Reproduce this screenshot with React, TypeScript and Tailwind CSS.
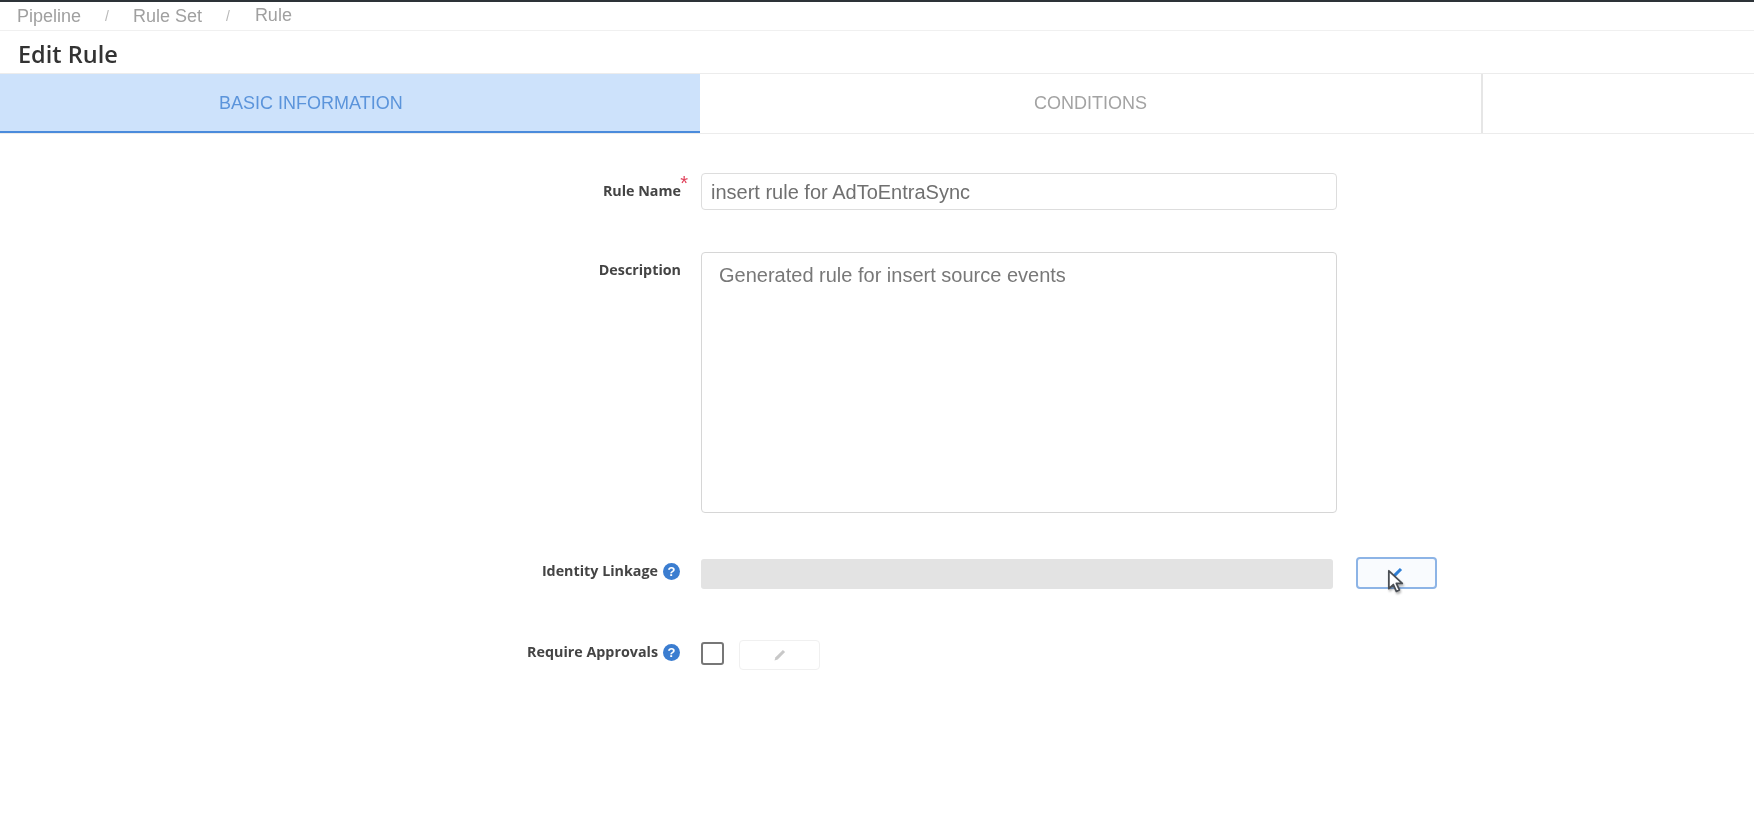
const labelClass = "font-['Open_Sans',sans-serif] text-[14.3px] font-bold leading-none text-[#444444]";

function HelpIcon() {
  return (
    <span className="flex h-[17px] w-[17px] items-center justify-center rounded-full bg-[#3b7dd0] font-['Liberation_Sans',sans-serif] text-[13px] font-bold leading-none text-white">
      ?
    </span>
  );
}

function PencilIcon({ color }: { color: string }) {
  return (
    <svg width="16" height="16" viewBox="0 0 16 16" fill="none">
      <path d="M2.5 13.5l1-3.2 7.4-7.4 2.2 2.2-7.4 7.4z" fill={color} />
    </svg>
  );
}

function Cursor() {
  return (
    <svg className="absolute left-[29px] top-[10px] drop-shadow-[1px_2px_1px_rgba(0,0,0,0.3)]" width="18" height="25" viewBox="0 0 20 28">
      <path d="M2 2v20l5-4.6 3.4 7.6 3.4-1.5-3.4-7.4h6.6z" fill="#ffffff" stroke="#4a4e54" strokeWidth="2" strokeLinejoin="round" />
    </svg>
  );
}

export default function App() {
  return (
    <div className="h-[822px] w-[1754px] overflow-hidden bg-white font-['Liberation_Sans',sans-serif] blur-[0.4px]">
      <div className="h-[2px] bg-[#2d3338]" />

      <nav className="flex h-[29px] items-center border-b border-[#f0f0f0] pl-[17px] pt-[1px] text-[18px] text-[#a0a0a0]">
        <span>Pipeline</span>
        <span className="mx-[24px] text-[14px] text-[#b8b8b8]">/</span>
        <span>Rule Set</span>
        <span className="ml-[24px] mr-[25px] text-[14px] text-[#b8b8b8]">/</span>
        <span className="-mt-[3px]">Rule</span>
      </nav>

      <h1 className="flex h-[42px] items-center pl-[18px] pt-[6px] font-['Open_Sans',sans-serif] text-[23.5px] font-semibold text-[#333333]">
        Edit Rule
      </h1>

      <div className="flex h-[61px] border-y border-[#ececec] text-[18px]">
        <div className="flex w-[700px] items-center border-b-2 border-[#4a8bdc] bg-[#cde2fb] pl-[219px] pt-[2px] text-[#5b94db]">
          BASIC INFORMATION
        </div>
        <div className="flex w-[783px] items-center justify-center border-r-2 border-[#e6e6e6] text-[#a3a3a3]">
          CONDITIONS
        </div>
      </div>

      <form className="grid grid-cols-[681px_1fr] gap-x-[20px] pt-[39px]">
        <label className={`${labelClass} relative flex h-[37px] items-center justify-end`}>
          Rule Name
          <span className="absolute -right-[7px] top-0 font-['Liberation_Sans',sans-serif] text-[20px] font-normal text-[#e0405a]">*</span>
        </label>
        <div className="flex h-[37px] w-[636px] items-center rounded-[4px] border border-[#dddddd] pl-[9px] text-[20px] text-[#707070]">
          insert rule for AdToEntraSync
        </div>

        <label className={`${labelClass} mt-[42px] justify-self-end pt-[11px]`}>Description</label>
        <div className="mt-[42px] h-[261px] w-[636px] rounded-[4px] border border-[#d6d6d6] pl-[17px] pt-[10px] text-[20px] leading-[24px] text-[#787878]">
          Generated rule for insert source events
        </div>

        <div className={`${labelClass} mt-[44px] flex h-[32px] items-center justify-end gap-[5px] pb-[3px] pr-[1px]`}>
          Identity Linkage
          <HelpIcon />
        </div>
        <div className="mt-[44px] flex h-[32px] items-end">
          <div className="h-[30px] w-[632px] rounded-[3px] bg-[#e3e3e3]" />
          <button type="button" className="relative ml-[23px] flex h-[32px] w-[81px] shrink-0 items-center justify-center rounded-[4px] border-2 border-[#8db4e6] bg-[#f9fbfe]">
            <PencilIcon color="#2f7fd6" />
            <Cursor />
          </button>
        </div>

        <div className={`${labelClass} mt-[51px] flex h-[30px] items-center justify-end gap-[5px] pb-[5px] pr-[1px]`}>
          Require Approvals
          <HelpIcon />
        </div>
        <div className="mt-[51px] flex h-[30px] items-start">
          <span className="mt-[2px] h-[23px] w-[23px] rounded-[3px] border-2 border-[#777777] bg-white" />
          <button type="button" className="ml-[15px] flex h-[30px] w-[81px] items-center justify-center rounded-[4px] border border-[#f0f0f0] bg-white">
            <PencilIcon color="#c8c8c8" />
          </button>
        </div>
      </form>
    </div>
  );
}
